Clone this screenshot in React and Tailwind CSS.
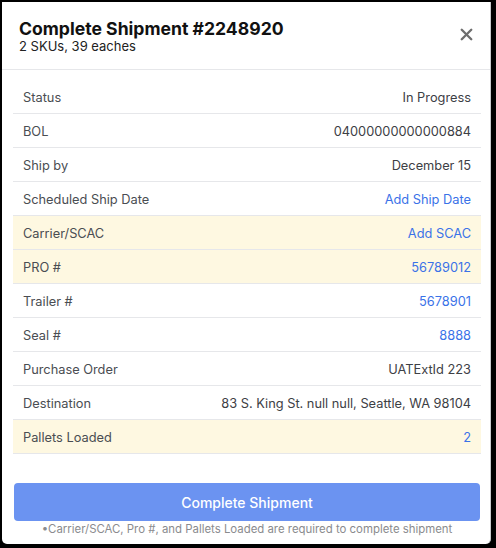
import { X } from 'lucide-react';

const rows = [
  { label: 'Status', value: 'In Progress' },
  { label: 'BOL', value: '04000000000000884' },
  { label: 'Ship by', value: 'December 15' },
  { label: 'Scheduled Ship Date', value: 'Add Ship Date', link: true },
  { label: 'Carrier/SCAC', value: 'Add SCAC', link: true, required: true },
  { label: 'PRO #', value: '56789012', link: true, required: true },
  { label: 'Trailer #', value: '5678901', link: true },
  { label: 'Seal #', value: '8888', link: true },
  { label: 'Purchase Order', value: 'UATExtId 223' },
  { label: 'Destination', value: '83 S. King St. null null, Seattle, WA 98104' },
  { label: 'Pallets Loaded', value: '2', link: true, required: true },
];

const DetailRow = ({ label, value, link, required }) => (
  <div
    className={`flex h-[34px] items-center justify-between border-b border-[#e6e7ea] px-[10px] pt-[2px] text-[12.8px] ${
      required ? 'bg-[#fef8e1]' : ''
    }`}
  >
    <span className="text-[#4a4d52]">{label}</span>
    {link ? (
      <button className="text-[#3a72e8]">{value}</button>
    ) : (
      <span className="text-[#3d4045]">{value}</span>
    )}
  </div>
);

export default function App() {
  return (
    <div className="h-[548px] w-[496px] bg-black pl-[2px] pt-[2px]" style={{ fontFamily: 'Inter, "Noto Sans", sans-serif' }}>
      <div className="flex h-[542px] w-[489px] flex-col rounded-b-[5px] border-r border-[#c9cacd] bg-white">
        {/* Header */}
        <div className="flex items-start justify-between border-b border-[#e6e7ea] pb-[15px] pl-[17px] pr-[14px] pt-[17px]">
          <div>
            <h2 className="text-[17.6px] font-bold leading-5 text-[#111]">Complete Shipment #2248920</h2>
            <p className="text-[13px] leading-[15px] text-[#222]">2 SKUs, 39 eaches</p>
          </div>
          <button className="mt-[6px] text-[#6e6e6e]">
            <X size={19} strokeWidth={3} />
          </button>
        </div>

        {/* Details */}
        <div className="ml-[11px] mr-[9px] mt-[10px]">
          {rows.map(r => (
            <DetailRow key={r.label} {...r} />
          ))}
        </div>

        {/* Footer */}
        <div className="mt-auto pb-[8px] pl-[12px] pr-[10px]">
          <button className="h-[38px] w-full rounded-[4px] bg-[#6b93f1] text-[14px] font-medium text-white">
            Complete Shipment
          </button>
          <p className="mt-px text-center text-[11.4px] leading-[14px] text-[#8a8b8e]">
            •Carrier/SCAC, Pro #, and Pallets Loaded are required to complete shipment
          </p>
        </div>
      </div>
    </div>
  );
}
